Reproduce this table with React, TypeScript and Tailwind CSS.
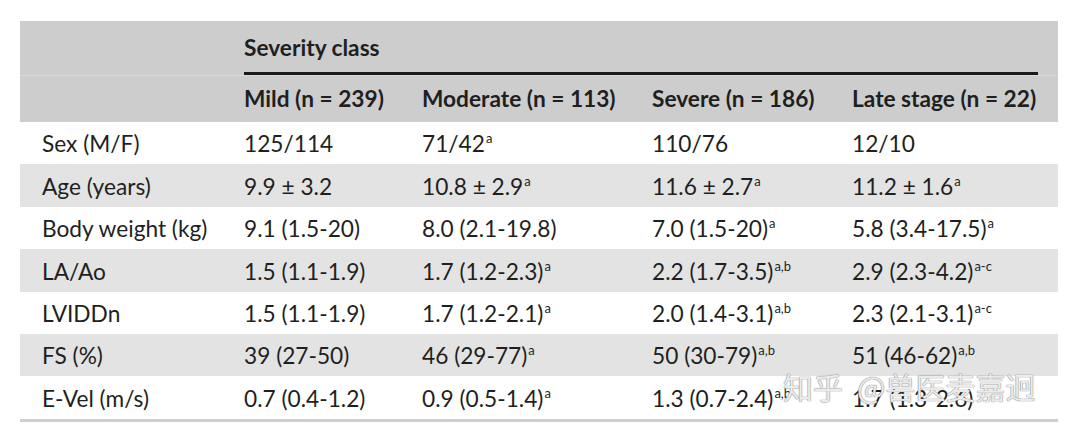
import React from "react";

type Cell = { v: string; sup?: string };

// Table rows: label + four severity columns
const rows: { label: string; cells: Cell[] }[] = [
  { label: "Sex (M/F)", cells: [{ v: "125/114" }, { v: "71/42", sup: "a" }, { v: "110/76" }, { v: "12/10" }] },
  { label: "Age (years)", cells: [{ v: "9.9 ± 3.2" }, { v: "10.8 ± 2.9", sup: "a" }, { v: "11.6 ± 2.7", sup: "a" }, { v: "11.2 ± 1.6", sup: "a" }] },
  { label: "Body weight (kg)", cells: [{ v: "9.1 (1.5-20)" }, { v: "8.0 (2.1-19.8)" }, { v: "7.0 (1.5-20)", sup: "a" }, { v: "5.8 (3.4-17.5)", sup: "a" }] },
  { label: "LA/Ao", cells: [{ v: "1.5 (1.1-1.9)" }, { v: "1.7 (1.2-2.3)", sup: "a" }, { v: "2.2 (1.7-3.5)", sup: "a,b" }, { v: "2.9 (2.3-4.2)", sup: "a-c" }] },
  { label: "LVIDDn", cells: [{ v: "1.5 (1.1-1.9)" }, { v: "1.7 (1.2-2.1)", sup: "a" }, { v: "2.0 (1.4-3.1)", sup: "a,b" }, { v: "2.3 (2.1-3.1)", sup: "a-c" }] },
  { label: "FS (%)", cells: [{ v: "39 (27-50)" }, { v: "46 (29-77)", sup: "a" }, { v: "50 (30-79)", sup: "a,b" }, { v: "51 (46-62)", sup: "a,b" }] },
  { label: "E-Vel (m/s)", cells: [{ v: "0.7 (0.4-1.2)" }, { v: "0.9 (0.5-1.4)", sup: "a" }, { v: "1.3 (0.7-2.4)", sup: "a,b" }, { v: "1.7 (1.3-2.6)" }] },
];

const cols = "grid grid-cols-[224px_178px_230px_200px_206px]";

function Value({ c }: { c: Cell }) {
  return (
    <span className="whitespace-nowrap">
      {c.v}
      {c.sup && <span className="relative -top-[9px] ml-[1px] text-[13px]">{c.sup}</span>}
    </span>
  );
}

export default function App() {
  return (
    <div className="relative h-[434px] w-[1080px] bg-white font-['Lato','Liberation_Sans',sans-serif] text-[22.7px] leading-none text-[#1f1f1f]">
      <div className="ml-[20px] w-[1038px] pt-[21px]">
        {/* Header */}
        <div className="bg-[#cdcdcd]">
          <div className={`${cols} h-[54px] items-end`}>
            <div />
            <div className="col-span-4 mr-[20px] flex h-full items-center border-b-[3px] border-[#1a1a1a] pt-[3px] font-bold">
              Severity class
            </div>
          </div>
          <div className={`${cols} h-[47px] items-center border-t border-[#d9d9d9] pt-[1px] font-bold`}>
            <div />
            <div>Mild (n = 239)</div>
            <div>Moderate (n = 113)</div>
            <div>Severe (n = 186)</div>
            <div>Late stage (n = 22)</div>
          </div>
        </div>

        {/* Body */}
        {rows.map((r, i) => (
          <div
            key={r.label}
            className={`${cols} h-[42.4px] items-center pt-[3px] ${i % 2 === 1 ? "bg-[#e3e3e3]" : "bg-white"}`}
          >
            <div className="pl-[22px]">{r.label}</div>
            {r.cells.map((c, j) => (
              <div key={j}>
                <Value c={c} />
              </div>
            ))}
          </div>
        ))}
        <div className="h-[3px] bg-[#cfcfcf]" />
      </div>

      {/* Watermark */}
      <div className="pointer-events-none absolute left-[783px] top-[371px] flex items-center gap-[14px] font-['Noto_Sans_CJK_SC',sans-serif] text-[30px] leading-none text-white/85 [text-shadow:0_0_1px_#777,0_0_1px_#777]">
        <span>知乎</span>
        <span>@兽医麦嘉迥</span>
      </div>
    </div>
  );
}
